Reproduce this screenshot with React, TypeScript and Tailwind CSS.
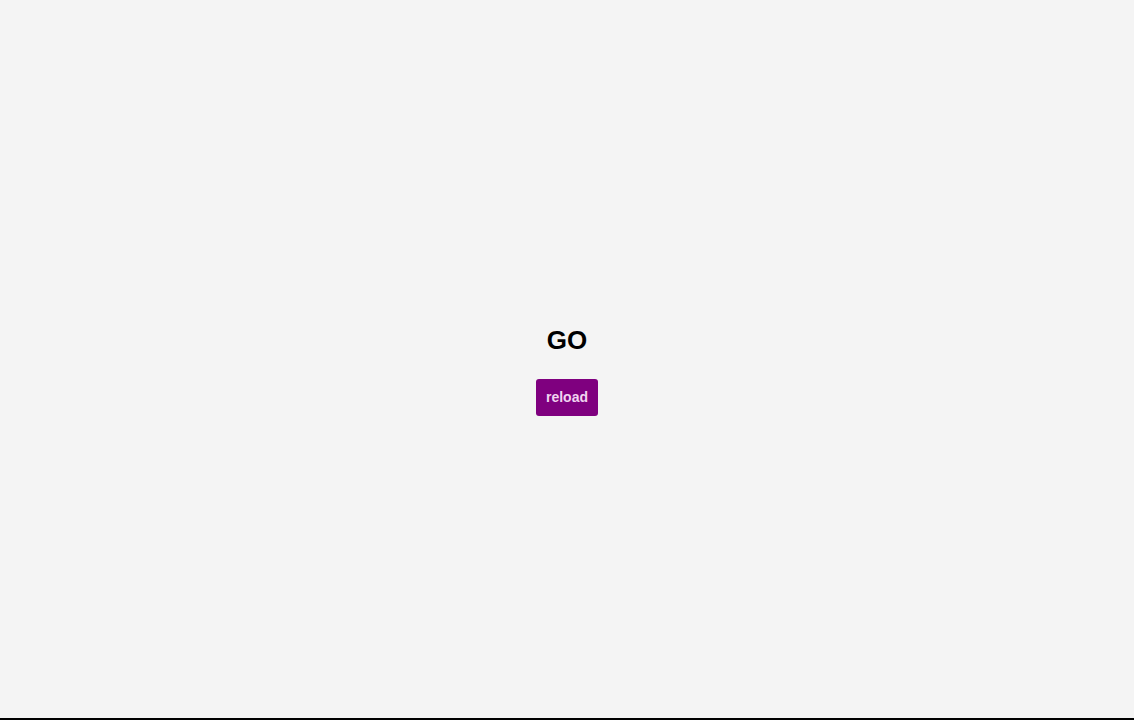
export default function App() {
  return (
    <div className="flex h-[720px] w-full flex-col bg-[#f4f4f4] font-['Liberation_Sans',Arial,sans-serif]">
      <div className="flex flex-1 flex-col items-center justify-center gap-[26px] pt-[24px]">
        <h1 className="text-[26px] font-bold leading-none text-black">GO</h1>
        <button className="h-[37px] w-[62px] rounded-[3px] bg-[#7f007f] text-[14px] font-bold text-[#f0d4f0]">
          reload
        </button>
      </div>
      <div className="h-[2px] w-full bg-black" />
    </div>
  );
}
